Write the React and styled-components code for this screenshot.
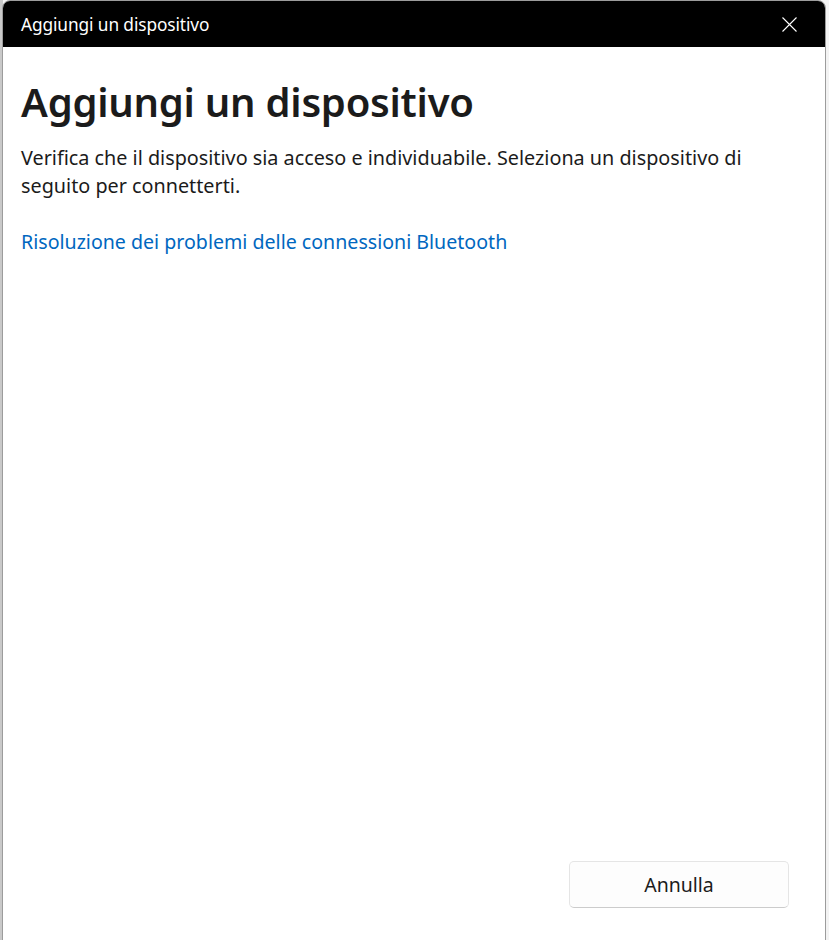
import React from "react";
import styled, { createGlobalStyle } from "styled-components";

const Global = createGlobalStyle`
  html, body {
    margin: 0;
    padding: 0;
    height: 940px;
    overflow: hidden;
    background: #cfcfcf;
  }
  * { box-sizing: border-box; }
`;

const Backdrop = styled.div`
  display: flex;
  height: 940px;
  padding-left: 2px;
  font-family: "Noto Sans", "Open Sans", sans-serif;
  background: linear-gradient(to right, #c9c9c9 0 3px, #f3f3f3 3px);
`;

const Window = styled.div`
  width: 824px;
  height: 960px;
  display: flex;
  flex-direction: column;
  background: #ffffff;
  border: 1px solid #9c9c9c;
  border-radius: 8px 8px 0 0;
  overflow: hidden;
`;

const TitleBar = styled.div`
  height: 46px;
  flex: none;
  display: flex;
  align-items: center;
  justify-content: space-between;
  background: #000000;
  color: #ffffff;
  padding: 0 24px 0 18px;
`;

const TitleText = styled.span`
  font-size: 17.3px;
  letter-spacing: -0.1px;
`;

const CloseButton = styled.button`
  display: flex;
  align-items: center;
  justify-content: center;
  width: 24px;
  height: 24px;
  padding: 0;
  border: none;
  background: transparent;
  color: #ffffff;
`;

const Body = styled.div`
  flex: 1;
  display: flex;
  flex-direction: column;
  padding: 28px 24px 0 18px;
`;

const Heading = styled.h1`
  margin: 0;
  font-size: 40px;
  font-weight: 600;
  line-height: 54px;
  color: #1b1b1b;
  letter-spacing: -0.25px;
`;

const Description = styled.p`
  max-width: 750px;
  margin: 15px 0 0;
  font-size: 19.8px;
  line-height: 28px;
  color: #1b1b1b;
`;

const HelpLink = styled.a`
  align-self: flex-start;
  margin-top: 28px;
  font-size: 19.6px;
  line-height: 28px;
  color: #0067c0;
  text-decoration: none;
`;

const Footer = styled.div`
  margin-top: auto;
  display: flex;
  justify-content: flex-end;
  padding: 0 12px 51px 0;
`;

const Button = styled.button`
  width: 220px;
  height: 47px;
  border: 1px solid #e5e5e5;
  border-bottom-color: #cccccc;
  border-radius: 5px;
  background: #fdfdfd;
  font-family: inherit;
  font-size: 19.5px;
  color: #1b1b1b;
`;

const App = () => (
  <>
    <Global />
    <Backdrop>
      <Window>
        <TitleBar>
          <TitleText>Aggiungi un dispositivo</TitleText>
          <CloseButton aria-label="Chiudi">
            <svg width="15" height="15" viewBox="0 0 15 15">
              <path d="M0.5 0.5 L14.5 14.5 M14.5 0.5 L0.5 14.5" stroke="currentColor" strokeWidth="1.1" />
            </svg>
          </CloseButton>
        </TitleBar>
        <Body>
          <Heading>Aggiungi un dispositivo</Heading>
          <Description>
            Verifica che il dispositivo sia acceso e individuabile. Seleziona un dispositivo di seguito per connetterti.
          </Description>
          <HelpLink href="#">Risoluzione dei problemi delle connessioni Bluetooth</HelpLink>
          <Footer>
            <Button>Annulla</Button>
          </Footer>
        </Body>
      </Window>
    </Backdrop>
  </>
);

export default App;
